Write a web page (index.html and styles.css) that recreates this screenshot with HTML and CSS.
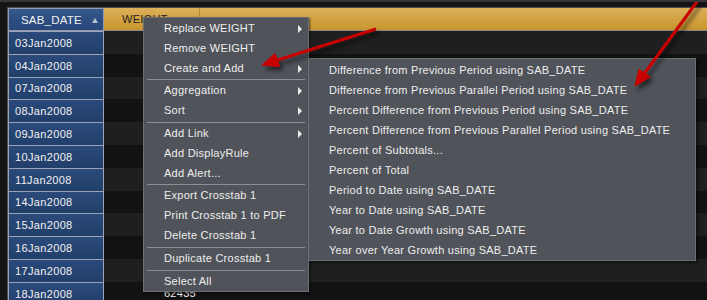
FILE: index.html
```html
<!DOCTYPE html>
<html lang="en">
<head>
    <meta charset="UTF-8">
    <title>Crosstab</title>
    <link rel="stylesheet" href="styles.css">
</head>
<body>
    <div class="frame">
        <div class="grid">
            <div class="hdr-row">
                <div class="hcell date-h">SAB_DATE<span class="sort-up"></span></div>
                <div class="hcell gold weight-h">WEIGHT</div>
                <div class="hcell gold fill"></div>
            </div>
            <div class="row odd"><div class="date">03Jan2008</div><div class="val"></div><div class="rest"></div></div>
            <div class="row"><div class="date">04Jan2008</div><div class="val"></div><div class="rest"></div></div>
            <div class="row odd"><div class="date">07Jan2008</div><div class="val"></div><div class="rest"></div></div>
            <div class="row"><div class="date">08Jan2008</div><div class="val"></div><div class="rest"></div></div>
            <div class="row odd"><div class="date">09Jan2008</div><div class="val"></div><div class="rest"></div></div>
            <div class="row"><div class="date">10Jan2008</div><div class="val"></div><div class="rest"></div></div>
            <div class="row odd"><div class="date">11Jan2008</div><div class="val"></div><div class="rest"></div></div>
            <div class="row"><div class="date">14Jan2008</div><div class="val"></div><div class="rest"></div></div>
            <div class="row odd"><div class="date">15Jan2008</div><div class="val"></div><div class="rest"></div></div>
            <div class="row"><div class="date">16Jan2008</div><div class="val"></div><div class="rest"></div></div>
            <div class="row odd"><div class="date">17Jan2008</div><div class="val"></div><div class="rest"></div></div>
            <div class="row"><div class="date">18Jan2008</div><div class="val">62435</div><div class="rest"></div></div>
        </div>
    </div>

    <!-- context menu -->
    <div class="menu">
        <div class="item sub">Replace WEIGHT</div>
        <div class="item">Remove WEIGHT</div>
        <div class="item sub">Create and Add</div>
        <div class="sep"></div>
        <div class="item sub">Aggregation</div>
        <div class="item sub">Sort</div>
        <div class="sep"></div>
        <div class="item sub">Add Link</div>
        <div class="item">Add DisplayRule</div>
        <div class="item">Add Alert...</div>
        <div class="sep"></div>
        <div class="item">Export Crosstab 1</div>
        <div class="item">Print Crosstab 1 to PDF</div>
        <div class="item">Delete Crosstab 1</div>
        <div class="sep"></div>
        <div class="item">Duplicate Crosstab 1</div>
        <div class="sep"></div>
        <div class="item">Select All</div>
    </div>

    <div class="submenu">
        <div class="item">Difference from Previous Period using SAB_DATE</div>
        <div class="item">Difference from Previous Parallel Period using SAB_DATE</div>
        <div class="item">Percent Difference from Previous Period using SAB_DATE</div>
        <div class="item">Percent Difference from Previous Parallel Period using SAB_DATE</div>
        <div class="item">Percent of Subtotals...</div>
        <div class="item">Percent of Total</div>
        <div class="item">Period to Date using SAB_DATE</div>
        <div class="item">Year to Date using SAB_DATE</div>
        <div class="item">Year to Date Growth using SAB_DATE</div>
        <div class="item">Year over Year Growth using SAB_DATE</div>
    </div>

    <!-- annotation arrows -->
    <svg class="arrows" width="707" height="300" viewBox="0 0 707 300">
        <defs>
            <filter id="shadow" x="-20%" y="-20%" width="140%" height="140%">
                <feDropShadow dx="3" dy="4" stdDeviation="2" flood-color="#000" flood-opacity="0.55"/>
            </filter>
        </defs>
        <g filter="url(#shadow)" fill="#c80000" stroke="#c80000">
            <line x1="376" y1="29" x2="276" y2="60.5" stroke-width="3"/>
            <polygon points="262,65 279.5,66.5 275,53.5" stroke-width="1"/>
            <line x1="699" y1="-1" x2="644" y2="74" stroke-width="3"/>
            <polygon points="635,86 650,77 639,69" stroke-width="1"/>
        </g>
    </svg>
</body>
</html>
```

FILE: styles.css
```css
body {
    margin: 0;
    background-color: #151515;
    border-top: 2px solid #363636;
    font-family: "Liberation Sans", Arial, sans-serif;
    font-size: 11px;
    width: 707px;
    height: 298px;
    overflow: hidden;
    position: relative;
}

.frame {
    margin: 5px 0 0 7px;
    border-left: 1px solid #4e4e4e;
    border-top: 1px solid #4e4e4e;
    height: 300px;
}

.grid {
    display: flex;
    flex-direction: column;
}

.hdr-row {
    display: flex;
    height: 23px;
}

.hcell {
    box-sizing: border-box;
    height: 23px;
    display: flex;
    align-items: center;
    border-bottom: 1px solid #8a8a8a;
}

.date-h {
    width: 96px;
    flex: none;
    position: relative;
    padding-left: 12px;
    color: #f2f2f2;
    font-size: 11.5px;
    letter-spacing: 0.2px;
    background: linear-gradient(#35578c, #27467a);
    border: 1px solid #8e9bb0;
}

.sort-up {
    position: absolute;
    right: 5px;
    top: 9px;
    border-left: 3px solid transparent;
    border-right: 3px solid transparent;
    border-bottom: 5px solid #b9c3d4;
}

.gold {
    background: linear-gradient(#ddb05a, #c8952d);
    color: #1e1e1e;
}

.weight-h {
    width: 96px;
    flex: none;
    padding-left: 18px;
    border-right: 1px solid #b58a3a;
    letter-spacing: 0.3px;
}

.fill {
    flex: 1;
}

.row {
    display: flex;
    height: 22.8px;
    background-color: #121212;
}

.row.odd {
    background-color: #1f1f1f;
}

.date {
    box-sizing: border-box;
    width: 96px;
    flex: none;
    padding-left: 6px;
    display: flex;
    align-items: center;
    color: #f0f0f0;
    letter-spacing: 0.35px;
    background: linear-gradient(#2b4a7a, #223f6b);
    border-top: 1px solid #9aa4b4;
    border-left: 1px solid #9aa4b4;
    border-right: 1px solid #9aa4b4;
}

.val {
    box-sizing: border-box;
    width: 96px;
    flex: none;
    display: flex;
    align-items: center;
    justify-content: flex-end;
    padding-right: 4px;
    color: #f0f0f0;
    letter-spacing: 0.3px;
}

.rest {
    flex: 1;
}

.menu, .submenu {
    position: absolute;
    box-sizing: border-box;
    background-color: #50535a;
    border: 1px solid #6c6f75;
    color: #eeeeee;
    letter-spacing: 0.25px;
}

.menu {
    left: 143px;
    top: 15px;
    width: 166px;
    height: 275px;
    padding-top: 1px;
    box-shadow: 1px 1px 2px rgba(0, 0, 0, 0.6);
}

.submenu {
    left: 308px;
    top: 56px;
    width: 388px;
    height: 203px;
    padding-top: 1px;
    box-shadow: 2px 2px 3px rgba(0, 0, 0, 0.5);
}

.menu .item {
    height: 19.8px;
    line-height: 19.8px;
    padding-left: 20px;
    position: relative;
    white-space: nowrap;
}

.submenu .item {
    height: 20px;
    line-height: 20px;
    padding-left: 20px;
    white-space: nowrap;
}

.item.sub::after {
    content: "";
    position: absolute;
    right: 6px;
    top: 6px;
    border-top: 4px solid transparent;
    border-bottom: 4px solid transparent;
    border-left: 4px solid #eeeeee;
}

.sep {
    height: 1px;
    margin: 1px 3px 1px 3px;
    background-color: #8c8f94;
}

.arrows {
    position: absolute;
    left: 0;
    top: -2px;
    pointer-events: none;
}
```
